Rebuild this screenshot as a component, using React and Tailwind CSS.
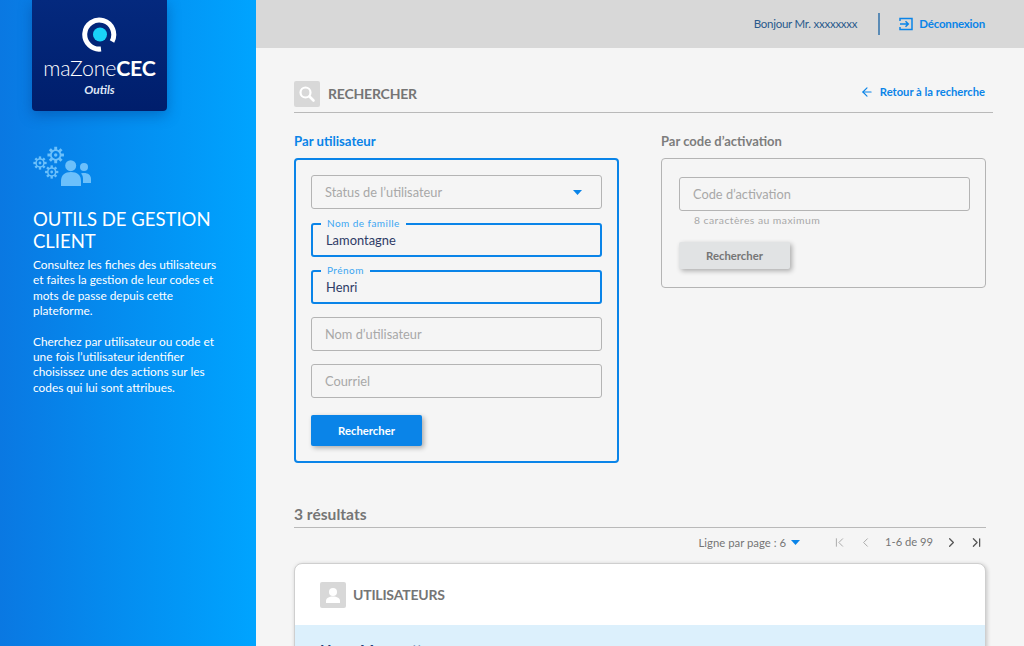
import React from 'react';
import { ArrowLeft, ChevronLeft, ChevronRight, ChevronFirst, ChevronLast } from 'lucide-react';

function Gear({ x, y, r }) {
  const teeth = [0, 45, 90, 135, 180, 225, 270, 315];
  return (
    <g transform={`translate(${x} ${y})`}>
      {teeth.map((a) => (
        <rect key={a} x={-r * 0.22} y={-r * 1.25} width={r * 0.44} height={r * 0.5} transform={`rotate(${a})`} fill="#6cc0fb" />
      ))}
      <circle r={r * 0.74} fill="none" stroke="#6cc0fb" strokeWidth={r * 0.28} />
      <circle r={r * 0.26} fill="#6cc0fb" />
    </g>
  );
}

function ToolsIcon() {
  return (
    <svg width="60" height="42" viewBox="0 0 60 42" className="ml-[33px]">
      <Gear x={7} y={17} r={5.3} />
      <Gear x={22.7} y={9} r={6.6} />
      <Gear x={18.7} y={26} r={5.3} />
      <circle cx="37.7" cy="19.7" r="5.5" fill="#6cc0fb" />
      <path d="M28 40 v-5 c0-6 4-9 10-9 s10 3 10 9 v5 z" fill="#6cc0fb" />
      <circle cx="51" cy="21" r="4" fill="#6cc0fb" />
      <path d="M50 37 h8 v-4 c0-4-3-6-7-6 c-1 0-2 0-3 .5 c2 2 2 4 2 6.5 z" fill="#6cc0fb" />
    </svg>
  );
}

function Sidebar() {
  return (
    <aside className="w-[256px] shrink-0 bg-gradient-to-r from-[#0a78e2] to-[#00a4ff] text-white">
      <div className="ml-[32px] flex h-[111px] w-[135px] flex-col items-center rounded-b-[4px] bg-gradient-to-b from-[#04297e] to-[#001e6c] pt-[17px] shadow-[0_4px_14px_rgba(0,40,110,0.35)]">
        <svg width="36" height="36" viewBox="0 0 36 36">
          <circle cx="18" cy="17.5" r="7" fill="#19d3f8" />
          <path d="M30 24.5 A14.5 14.5 0 1 0 19 32" fill="none" stroke="#fff" strokeWidth="5" />
        </svg>
        <div className="mt-[2px] flex items-baseline text-[21.3px] leading-[26px] tracking-[-0.2px]">
          <span className="font-light">maZone</span>
          <span className="font-bold">CEC</span>
        </div>
        <div className="mt-[1px] text-[12px] font-bold italic leading-[16px] text-[#dfe6f5]">Outils</div>
      </div>
      <div className="mt-[35px]">
        <ToolsIcon />
      </div>
      <h1 className="ml-[33px] mt-[20px] w-[200px] text-[18.5px] leading-[22px]">OUTILS DE GESTION CLIENT</h1>
      <p className="ml-[33px] mt-[5px] w-[190px] text-[11.85px] leading-[15.4px]">
        Consultez les fiches des utilisateurs et faites la gestion de leur codes et mots de passe depuis cette plateforme.
      </p>
      <p className="ml-[33px] mt-[15px] w-[190px] text-[11.85px] leading-[15.4px]">
        Cherchez par utilisateur ou code et une fois l’utilisateur identifier choisissez une des actions sur les codes qui lui sont attribues.
      </p>
    </aside>
  );
}

function Header() {
  return (
    <header className="flex h-[48px] shrink-0 items-center justify-end bg-[#d8d8d8] pr-[39px] text-[11.5px]">
      <span className="tracking-[-0.25px] text-[#2a5a8c]">Bonjour Mr. xxxxxxxx</span>
      <span className="ml-[21px] mr-[19px] h-[22px] w-[2px] bg-[#5b8bb5]" />
      <svg width="14" height="14" viewBox="0 0 14 14" fill="none" stroke="#0a84e8" strokeWidth="1.5" className="mr-[6px]">
        <path d="M1 4 V1.5 H13 V12.5 H1 V10" />
        <path d="M1 7 H9 M6.5 4.2 L9.3 7 L6.5 9.8" />
      </svg>
      <span className="font-bold tracking-[-0.2px] text-[#0a84e8]">Déconnexion</span>
    </header>
  );
}

function Field({ label, value }) {
  if (label) {
    return (
      <div className="relative flex h-[34px] items-center rounded-[3px] border-2 border-[#0a84e8] pl-[13px] pt-[1px] text-[12.9px] text-[#2e3b66]">
        <span className="absolute left-[8px] top-[-7px] bg-[#f5f5f5] px-[6px] text-[10px] leading-[11px] tracking-[0.45px] text-[#3aa5f2]">{label}</span>
        {value}
      </div>
    );
  }
  return (
    <div className="flex h-[34px] items-center rounded-[3px] border border-[#b4b4b4] pl-[13px] pt-[1px] text-[12.8px] text-[#a8a8a8]">
      {value}
    </div>
  );
}

function Caret({ className }) {
  return (
    <svg width="9" height="5" viewBox="0 0 9 5" className={className}>
      <path d="M0 0 H9 L4.5 5 z" fill="#0a84e8" />
    </svg>
  );
}

function SearchSection() {
  return (
    <section>
      <div className="mr-[-7px] flex h-[32px] items-start justify-between border-b border-[#b9b9b9]">
        <div className="flex items-center gap-[8px]">
          <div className="h-[26px] w-[26px] rounded-[2px] bg-[#d8d8d8]">
            <svg width="26" height="26" viewBox="0 0 26 26" fill="none" stroke="#fff" strokeWidth="2.2" strokeLinecap="round">
              <circle cx="11.5" cy="11.5" r="5" />
              <path d="M15.5 15.5 L19.5 19.5" strokeWidth="2.6" />
            </svg>
          </div>
          <h2 className="mb-[2px] text-[14px] font-bold tracking-[-0.2px] text-[#757575]">RECHERCHER</h2>
        </div>
        <a className="mr-[8px] mt-[3px] flex items-center gap-[6px] text-[11.2px] font-bold text-[#0a84e8]">
          <ArrowLeft size={14} strokeWidth={2} />
          Retour à la recherche
        </a>
      </div>
      <div className="mt-[20px] grid grid-cols-[325px_325px] gap-x-[42px]">
        <div>
          <h3 className="text-[13.2px] font-bold leading-[17px] text-[#0a84e8]">Par utilisateur</h3>
          <div className="mt-[8px] h-[305px] rounded-[4px] border-2 border-[#0a84e8] px-[15px] pt-[15px]">
            <div className="flex h-[34px] items-center justify-between rounded-[3px] border border-[#b4b4b4] pl-[13px] pr-[19px] pt-[1px] text-[12.8px] text-[#a8a8a8]">
              Status de l’utilisateur
              <Caret />
            </div>
            <div className="mt-[14px] flex flex-col gap-[13px]">
              <Field label="Nom de famille" value="Lamontagne" />
              <Field label="Prénom" value="Henri" />
              <Field value="Nom d’utilisateur" />
              <Field value="Courriel" />
            </div>
            <button className="mt-[17px] h-[31px] w-[111px] rounded-[2px] bg-[#0a84e8] pt-[1px] text-[11.3px] font-bold text-white shadow-[2px_2px_5px_rgba(0,0,0,0.3)]">
              Rechercher
            </button>
          </div>
        </div>
        <div>
          <h3 className="text-[13px] font-bold leading-[17px] text-[#7d7d7d]">Par code d’activation</h3>
          <div className="mt-[8px] h-[130px] rounded-[4px] border border-[#b4b4b4] px-[17px] pt-[18px]">
            <div className="mr-[-2px] flex h-[34px] items-center rounded-[3px] border border-[#b4b4b4] pl-[13px] pt-[1px] text-[12.8px] text-[#a8a8a8]">
              Code d’activation
            </div>
            <p className="ml-[15px] mt-[2px] text-[10.4px] leading-[14px] tracking-[0.45px] text-[#a8a8a8]">8 caractères au maximum</p>
            <button className="mt-[15px] h-[27px] w-[111px] rounded-[2px] bg-[#e1e3e4] pt-[1px] text-[11.3px] font-bold text-[#757575] shadow-[2px_2px_5px_rgba(0,0,0,0.3)]">
              Rechercher
            </button>
          </div>
        </div>
      </div>
    </section>
  );
}

function Results() {
  return (
    <section className="mt-[41px]">
      <h2 className="h-[24px] border-b border-[#b9b9b9] text-[15.6px] font-bold leading-[20px] text-[#757575]">3 résultats</h2>
      <div className="mt-[7px] flex h-[15px] items-center justify-end pr-[2px] text-[11.2px] text-[#757575]">
        <span className="text-[11.35px]">Ligne par page : 6</span>
        <Caret className="ml-[5px]" />
        <ChevronFirst size={15} strokeWidth={1.5} color="#a5a5a5" className="ml-[32px]" />
        <ChevronLeft size={15} strokeWidth={1.5} color="#a5a5a5" className="ml-[11px]" />
        <span className="ml-[12px]">1-6 de 99</span>
        <ChevronRight size={15} strokeWidth={2} color="#555" className="ml-[11px]" />
        <ChevronLast size={15} strokeWidth={2} color="#555" className="ml-[10px]" />
      </div>
      <div className="mt-[13px] rounded-t-[8px] border border-[#cfcfcf] bg-white shadow-[1px_1px_4px_rgba(0,0,0,0.2)]">
        <div className="flex h-[61px] items-center gap-[7px] pl-[25px]">
          <div className="h-[26px] w-[26px] rounded-[2px] bg-[#d8d8d8]">
            <svg width="26" height="26" viewBox="0 0 26 26" fill="#fff">
              <circle cx="13" cy="10" r="4" />
              <path d="M6 21 v-2 c0-3 3-4.5 7-4.5 s7 1.500 7 4.5 v2 z" />
            </svg>
          </div>
          <h2 className="text-[14px] font-bold tracking-[-0.2px] text-[#757575]">UTILISATEURS</h2>
        </div>
        <div className="h-[60px] bg-[#dcf0fc] pl-[25px] pt-[14px] text-[15px] font-bold text-[#1d3f78]">
          Hugo Marquette
        </div>
      </div>
    </section>
  );
}

export default function App() {
  return (
    <div className="flex h-[646px] w-[1024px] overflow-hidden bg-[#f5f5f5] font-['Lato',sans-serif]">
      <Sidebar />
      <div className="flex min-w-0 flex-1 flex-col">
        <Header />
        <main className="pl-[38px] pr-[38px] pt-[33px]">
          <SearchSection />
          <Results />
        </main>
      </div>
    </div>
  );
}
